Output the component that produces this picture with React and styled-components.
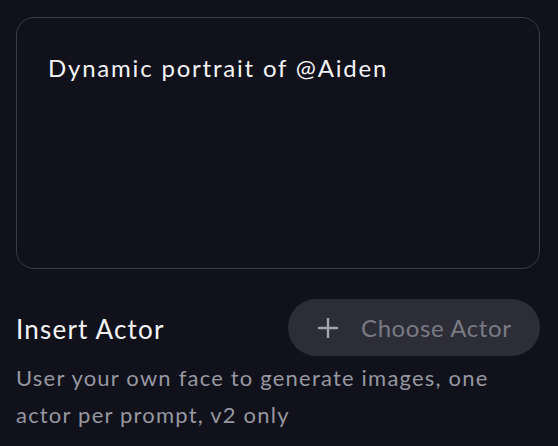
import React from "react";
import styled, { createGlobalStyle } from "styled-components";

const Global = createGlobalStyle`
  html, body {
    margin: 0;
    background: #10111a;
    font-family: "Lato", "Noto Sans", sans-serif;
  }
`;

const Page = styled.div`
  padding: 17px 18px 0 16px;
  display: flex;
  flex-direction: column;
`;

const PromptBox = styled.div`
  height: 252px;
  box-sizing: border-box;
  border: 1px solid #3a3b46;
  border-radius: 18px;
  padding: 35px 31px;
  color: #f4f4f6;
  font-size: 24px;
  line-height: 30px;
  letter-spacing: 1.8px;
`;

const ActorRow = styled.div`
  margin-top: 30px;
  display: flex;
  align-items: center;
  justify-content: space-between;
`;

const Title = styled.div`
  color: #f4f4f6;
  font-size: 26px;
  letter-spacing: 1.2px;
  padding-top: 2px;
`;

const ChooseButton = styled.button`
  width: 252px;
  height: 57px;
  border: none;
  border-radius: 29px;
  background: #2c2d36;
  color: #797a84;
  font-family: inherit;
  font-size: 24px;
  letter-spacing: 0.6px;
  display: flex;
  align-items: center;
  gap: 21px;
  padding: 0 0 0 28px;
  cursor: pointer;
`;

const Hint = styled.p`
  margin: 3px 0 0;
  max-width: 500px;
  color: #9797a1;
  font-size: 22px;
  line-height: 37px;
  letter-spacing: 1.2px;
`;

export default function App() {
  return (
    <>
      <Global />
      <Page>
        <PromptBox>Dynamic portrait of @Aiden</PromptBox>
        <ActorRow>
          <Title>Insert Actor</Title>
          <ChooseButton>
            <svg width="24" height="24" viewBox="0 0 24 24" fill="none" stroke="#a3a4ad" strokeWidth="2.4" strokeLinecap="butt">
              <path d="M12 2v20M2 12h20" />
            </svg>
            Choose Actor
          </ChooseButton>
        </ActorRow>
        <Hint>User your own face to generate images, one actor per prompt, v2 only</Hint>
      </Page>
    </>
  );
}
